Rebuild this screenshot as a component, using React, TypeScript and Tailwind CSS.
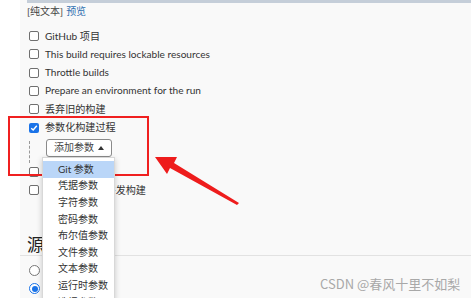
import React from "react";

const font = { fontFamily: 'Lato, "Noto Sans CJK SC", sans-serif' };

function Box({ checked = false }: { checked?: boolean }) {
  return checked ? (
    <span className="inline-flex h-[10px] w-[10px] items-center justify-center rounded-[2px] bg-[#1a73e8]">
      <svg width="8" height="8" viewBox="0 0 8 8">
        <path d="M1.2 4.2 L3.2 6 L6.8 1.8" stroke="white" strokeWidth="1.4" fill="none" />
      </svg>
    </span>
  ) : (
    <span className="inline-block h-[10px] w-[10px] rounded-[2px] border border-[#6f6f6f] bg-white" />
  );
}

function Row({ label, checked = false }: { label: string; checked?: boolean }) {
  return (
    <div className="flex h-[18.3px] items-center">
      <span className="ml-[2px] flex w-[16px]">
        <Box checked={checked} />
      </span>
      <span className="text-[10.1px] text-[#333]">{label}</span>
    </div>
  );
}

const items = ["Git 参数", "凭据参数", "字符参数", "密码参数", "布尔值参数", "文件参数", "文本参数", "运行时参数", "选择参数"];

export default function App() {
  return (
    <div className="relative h-[298px] w-[474px] overflow-hidden bg-white" style={font}>
      <div className="ml-[20px] flex h-full w-[451px] flex-col bg-[#f9f9f9]">
        <div className="ml-[7px] h-[3px] bg-[#c5ced9]" />
        <div className="ml-[7px] mt-[2px] flex h-[12px] items-center text-[10px]">
          <span className="text-[#444]">[纯文本]</span>
          <span className="ml-[3px] text-[#2e6fb0]">预览</span>
        </div>
        <div className="ml-[7px] mt-[10px] flex flex-col">
          <Row label="GitHub 项目" />
          <Row label="This build requires lockable resources" />
          <Row label="Throttle builds" />
          <Row label="Prepare an environment for the run" />
          <Row label="丢弃旧的构建" />
          <Row label="参数化构建过程" checked />
          <div className="flex h-[24px] items-start">
            <span className="ml-[2px] mt-[4px] h-[22px] w-[16px] border-l border-dashed border-[#999]" />
            <div className="ml-[1px] mt-[2px] flex h-[18px] w-[66px] items-center justify-center rounded-[3px] border border-[#8a8a8a] bg-white text-[10px] text-[#444]">
              添加参数
              <svg className="ml-[4px]" width="6" height="4" viewBox="0 0 6 4">
                <path d="M0 4 L3 0 L6 4 Z" fill="#333" />
              </svg>
            </div>
          </div>
          <div className="mt-[2px] flex flex-col">
            <Row label="" />
            <Row label="在必要的时候并发构建" />
          </div>
        </div>
        <div className="mt-[37px] flex items-end border-b border-[#e2e2e2] pb-[1px]">
          <span className="ml-[7px] text-[17px] leading-[18px] text-[#222]">源码管理</span>
        </div>
        <div className="ml-[9px] mt-[9px] flex flex-col gap-[7px]">
          <span className="inline-block h-[11px] w-[11px] rounded-full border border-[#777] bg-white" />
          <span className="inline-flex h-[11px] w-[11px] items-center justify-center rounded-full border border-[#1a73e8] bg-white">
            <span className="h-[6px] w-[6px] rounded-full bg-[#1a73e8]" />
          </span>
        </div>
      </div>

      {/* red highlight box */}
      <div className="absolute left-[8px] top-[116px] h-[60px] w-[141px] border-2 border-[#f02020]" />

      {/* dropdown menu */}
      <div className="absolute left-[42px] top-[157px] h-[150px] w-[73px] border border-[#d8d8d8] bg-white pt-[3px] shadow-[0_2px_6px_rgba(0,0,0,0.2)]">
        {items.map((it, i) => (
          <div
            key={it}
            className={
              i === 0
                ? "flex h-[16.6px] items-center bg-[#bad6f8] pl-[15px] text-[10px] text-[#333]"
                : "flex h-[16.6px] items-center pl-[15px] text-[10px] text-[#333]"
            }
          >
            {it}
          </div>
        ))}
      </div>

      {/* red arrow */}
      <svg className="absolute left-0 top-0" width="474" height="298" viewBox="0 0 474 298">
        <polygon points="155,157 177,157 174,163 239,203 237,205 170,168 167,174" fill="#ee1c1c" />
      </svg>

      {/* watermark */}
      <div className="absolute left-[320px] top-[274px] text-[13px] text-[#a8a8a8]" style={{ fontFamily: '"Noto Sans CJK SC", sans-serif' }}>
        CSDN @春风十里不如梨
      </div>
    </div>
  );
}
